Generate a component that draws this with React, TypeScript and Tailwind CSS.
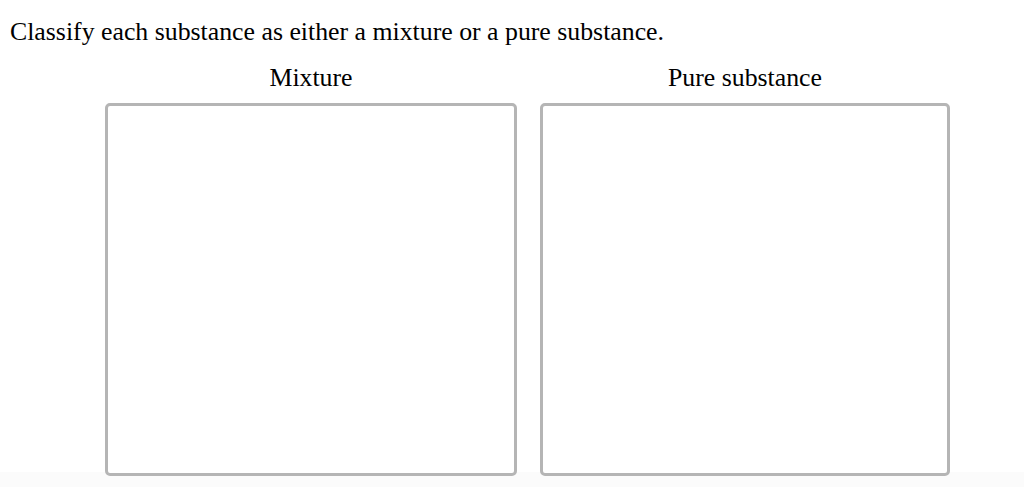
const bins = [
  { label: "Mixture", width: "w-[412px]" },
  { label: "Pure substance", width: "w-[410px]" },
];

export default function App() {
  return (
    <div className="min-h-screen bg-[#fbfbfb] font-['Liberation_Serif','Times_New_Roman',serif] text-black">
      <div className="h-[472px] bg-white">
        <p className="pl-[10px] pt-[17px] text-[25.8px] leading-[30px]">
          Classify each substance as either a mixture or a pure substance.
        </p>

        <div className="mt-[16px] flex gap-[23px] pl-[105px]">
          {bins.map((bin) => (
            <div key={bin.label} className={`flex flex-col ${bin.width}`}>
              <h2 className="text-center text-[25.8px] leading-[30px]">{bin.label}</h2>
              {/* empty drop zone */}
              <div className="mt-[10px] h-[373px] rounded-[5px] border-[3px] border-[#b5b5b5] bg-white" />
            </div>
          ))}
        </div>
      </div>
    </div>
  );
}
